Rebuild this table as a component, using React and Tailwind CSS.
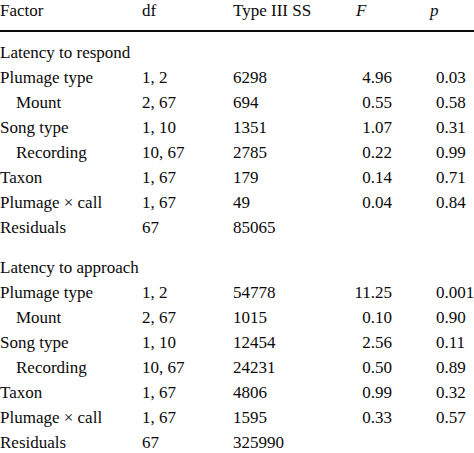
import React from "react"

const sections = [
  {
    title: "Latency to respond",
    rows: [
      ["Plumage type", "1, 2", "6298", "4.96", "0.03", false],
      ["Mount", "2, 67", "694", "0.55", "0.58", true],
      ["Song type", "1, 10", "1351", "1.07", "0.31", false],
      ["Recording", "10, 67", "2785", "0.22", "0.99", true],
      ["Taxon", "1, 67", "179", "0.14", "0.71", false],
      ["Plumage × call", "1, 67", "49", "0.04", "0.84", false],
      ["Residuals", "67", "85065", "", "", false],
    ],
  },
  {
    title: "Latency to approach",
    rows: [
      ["Plumage type", "1, 2", "54778", "11.25", "0.001", false],
      ["Mount", "2, 67", "1015", "0.10", "0.90", true],
      ["Song type", "1, 10", "12454", "2.56", "0.11", false],
      ["Recording", "10, 67", "24231", "0.50", "0.89", true],
      ["Taxon", "1, 67", "4806", "0.99", "0.32", false],
      ["Plumage × call", "1, 67", "1595", "0.33", "0.57", false],
      ["Residuals", "67", "325990", "", "", false],
    ],
  },
]

const Row = ({ factor, df, ss, f, p, indent }) => (
  <div className="grid grid-cols-[142px_91px_100px_59px_1fr] h-[25px] leading-[25px] whitespace-nowrap">
    <div className={indent ? "pl-[16px]" : ""}>{factor}</div>
    <div>{df}</div>
    <div>{ss}</div>
    <div className="text-right">{f}</div>
    <div className="pl-[44px]">{p}</div>
  </div>
)

export default function App() {
  return (
    <div
      className="w-[474px] h-[453px] overflow-hidden bg-white text-[#0a0a0a] text-[17px]"
      style={{ fontFamily: '"Liberation Serif", "Times New Roman", serif' }}
    >
      <div className="grid grid-cols-[142px_91px_100px_59px_1fr] h-[30px] leading-[20px] pt-[1px] whitespace-nowrap">
        <div>Factor</div>
        <div>df</div>
        <div>Type III SS</div>
        <div className="pl-[23px] italic">F</div>
        <div className="pl-[38px] italic">p</div>
      </div>
      <div className="border-t-2 border-[#0a0a0a]" />
      <div className="pt-[8px]">
        {sections.map((s, i) => (
          <div key={s.title} className={i > 0 ? "pt-[15px]" : ""}>
            <div className="h-[25px] leading-[25px]">{s.title}</div>
            {s.rows.map((r) => (
              <Row key={r[0] + r[1]} factor={r[0]} df={r[1]} ss={r[2]} f={r[3]} p={r[4]} indent={r[5]} />
            ))}
          </div>
        ))}
      </div>
    </div>
  )
}
